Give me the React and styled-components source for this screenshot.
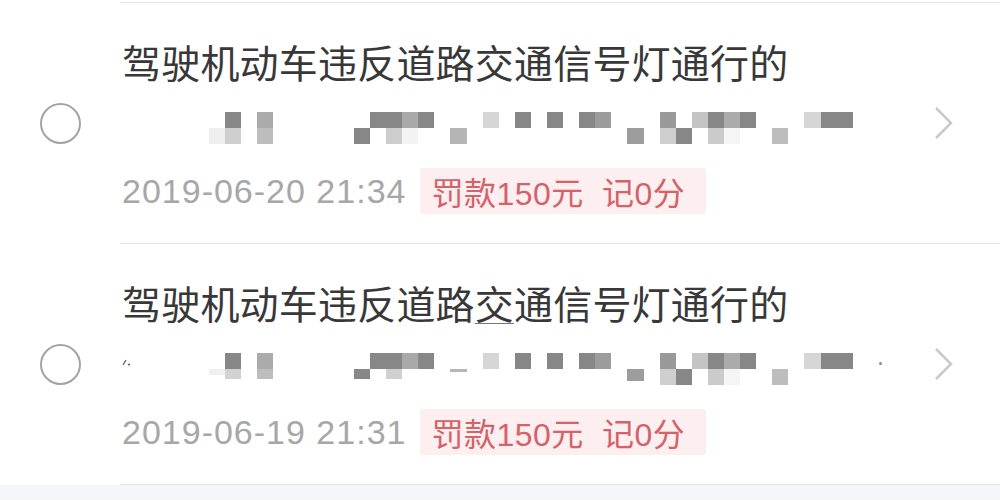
import styled, { createGlobalStyle } from "styled-components";

const GlobalStyle = createGlobalStyle`
  html, body {
    margin: 0;
    padding: 0;
    background: #ffffff;
  }
  body {
    font-family: "Noto Sans CJK SC", "Noto Sans", sans-serif;
  }
`;

const DARK = "#878787";

// pixelated plate/location strip: c = column, r = row, h = cell height
const mosaicTop = [
  [1, DARK], [3, "#ababab"], [10, DARK], [11, DARK], [12, "#a9a9a9"],
  [13, DARK], [17, "#d6d6d6"], [19, DARK], [21, DARK], [23, DARK],
  [24, "#9c9c9c"], [28, "#999999"], [30, "#c4c4c4"], [31, DARK],
  [32, "#ababab"], [33, DARK], [37, "#d6d6d6"], [38, DARK], [39, DARK],
];

const records = [
  {
    id: 1,
    time: "2019-06-20 21:34",
    fine: 150,
    points: 0,
    mark: false,
    cells: [
      ...mosaicTop.map(([c, color]) => ({ c, r: 0, color })),
      { c: 0, r: 1, color: "#efefef" },
      { c: 1, r: 1, color: "#cfcfcf" },
      { c: 3, r: 1, color: "#bdbdbd" },
      { c: 9, r: 1, color: DARK },
      { c: 11, r: 1, color: "#cdcdcd" },
      { c: 12, r: 1, color: "#f3f3f3" },
      { c: 15, r: 1, color: "#b5b5b5" },
      { c: 26, r: 1, color: "#9d9d9d" },
      { c: 28, r: 1, color: "#cfcfcf" },
      { c: 29, r: 1, color: DARK },
      { c: 31, r: 1, color: "#cbcbcb" },
      { c: 32, r: 1, color: "#f5f5f5" },
      { c: 35, r: 1, color: "#bdbdbd" },
    ],
  },
  {
    id: 2,
    time: "2019-06-19 21:31",
    fine: 150,
    points: 0,
    mark: true,
    cells: [
      ...mosaicTop.map(([c, color]) => ({ c, r: 0, color })),
      { c: 0, r: 1, color: "#f0f0f0", h: 6 },
      { c: 1, r: 1, color: "#d2d2d2", h: 10 },
      { c: 3, r: 1, color: "#bdbdbd", h: 10 },
      { c: 9, r: 1, color: DARK, h: 10 },
      { c: 11, r: 1, color: "#d0d0d0", h: 10 },
      { c: 15, r: 1, color: "#b5b5b5", h: 3 },
      { c: 26, r: 1, color: "#9d9d9d", h: 12 },
      { c: 28, r: 1, color: "#cfcfcf" },
      { c: 29, r: 1, color: DARK },
      { c: 31, r: 1, color: "#cbcbcb" },
      { c: 32, r: 1, color: "#f5f5f5" },
      { c: 35, r: 1, color: "#bdbdbd" },
    ],
  },
];

const Page = styled.div`
  min-height: 500px;
  display: flex;
  flex-direction: column;
  background: #ffffff;
`;

const PrevTail = styled.div`
  height: 2px;
  margin-left: 120px;
  border-bottom: 1px solid #e4e4e4;
`;

const Item = styled.div`
  display: flex;
`;

const RadioCell = styled.div`
  width: 120px;
  flex-shrink: 0;
  display: flex;
  align-items: center;
  justify-content: center;
`;

const Radio = styled.span`
  width: 37px;
  height: 37px;
  border-radius: 50%;
  border: 2px solid #a3a3a3;
`;

const Body = styled.div`
  flex: 1;
  display: flex;
  align-items: center;
  border-bottom: 1px solid #e4e4e4;
`;

const Content = styled.div`
  flex: 1;
  min-width: 0;
  padding: 34px 0 29px 2px;
`;

const Title = styled.div`
  font-size: 39px;
  line-height: 48px;
  letter-spacing: 0.2px;
  color: #383838;
  white-space: nowrap;
`;

const Marked = styled.span`
  text-decoration: underline;
  text-decoration-color: #777;
  text-decoration-thickness: 1px;
  text-underline-offset: 4px;
`;

const Mosaic = styled.div`
  margin-top: 27px;
  display: grid;
  grid-template-columns: 87px repeat(40, 16.1px) 40px;
  grid-template-rows: 16px 16px;
  align-items: start;
`;

const Cell = styled.span`
  grid-column: ${(p) => p.$c + 2};
  grid-row: ${(p) => p.$r + 1};
  height: ${(p) => p.$h || 16}px;
  background: ${(p) => p.$color};
`;

const Stroke = styled.svg`
  grid-column: 1;
  grid-row: 1;
  margin-top: 6px;
`;

const Dot = styled.span`
  grid-column: 42;
  grid-row: 1;
  width: 3px;
  height: 3px;
  margin: 9px 0 0 26px;
  border-radius: 50%;
  background: #8a8a8a;
`;

const Meta = styled.div`
  margin-top: 24px;
  height: 46px;
  display: flex;
  align-items: center;
`;

const Time = styled.span`
  font-family: "Liberation Sans", "Noto Sans CJK SC", sans-serif;
  font-size: 34px;
  letter-spacing: 1px;
  color: #a7a7a7;
`;

const Badge = styled.span`
  margin-left: 14px;
  height: 46px;
  display: flex;
  align-items: center;
  gap: 18px;
  padding: 0 21px 0 11px;
  background: #fdeeef;
  border-radius: 3px;
  color: #d4626a;
  font-family: "Liberation Sans", "Noto Sans CJK SC", sans-serif;
  font-size: 32px;
  letter-spacing: 0.5px;
`;

const Arrow = styled.svg`
  flex-shrink: 0;
  margin-right: 46px;
`;

const Footer = styled.div`
  flex: 1;
  background: #f4f6f9;
`;

function Record({ time, fine, points, mark, cells }) {
  return (
    <Item>
      <RadioCell>
        <Radio />
      </RadioCell>
      <Body>
        <Content>
          <Title>
            驾驶机动车违反道路{mark ? <Marked>交</Marked> : "交"}通信号灯通行的
          </Title>
          <Mosaic>
            {mark && (
              <Stroke width="14" height="8" viewBox="0 0 14 8">
                <path d="M4 1 L1 6 M6 6 L8 5" stroke="#666" strokeWidth="1.4" fill="none" />
              </Stroke>
            )}
            {cells.map((cell, i) => (
              <Cell key={i} $c={cell.c} $r={cell.r} $h={cell.h} $color={cell.color} />
            ))}
            {mark && <Dot />}
          </Mosaic>
          <Meta>
            <Time>{time}</Time>
            <Badge>
              <span>罚款{fine}元</span>
              <span>记{points}分</span>
            </Badge>
          </Meta>
        </Content>
        <Arrow width="20" height="34" viewBox="0 0 20 34">
          <polyline
            points="2,2 17,17 2,32"
            fill="none"
            stroke="#c9c9c9"
            strokeWidth="2.5"
          />
        </Arrow>
      </Body>
    </Item>
  );
}

export default function App() {
  return (
    <Page>
      <GlobalStyle />
      <PrevTail />
      {records.map((r) => (
        <Record key={r.id} {...r} />
      ))}
      <Footer />
    </Page>
  );
}
